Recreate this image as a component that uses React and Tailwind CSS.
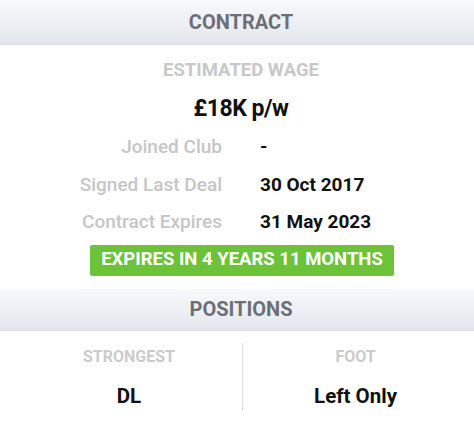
export default function App() {
  const rows = [
    { label: 'Joined Club', value: '-' },
    { label: 'Signed Last Deal', value: '30 Oct 2017' },
    { label: 'Contract Expires', value: '31 May 2023' },
  ];

  return (
    <div className="w-[474px] h-[425px] bg-white overflow-hidden font-['Roboto',sans-serif]">
      <SectionBar title="CONTRACT" className="h-[45px]" />

      <div className="flex flex-col items-center pl-[8px]">
        <div className="mt-[13px] text-[18.5px] leading-[24px] font-bold text-[#c8c8c8]">
          ESTIMATED WAGE
        </div>
        <div className="mt-[12px] text-[23px] leading-[30px] font-bold tracking-[-0.02em] text-[#111]">
          £18K p/w
        </div>
      </div>

      <div className="mt-[4px] grid grid-cols-[222px_1fr] gap-x-[38px]">
        {rows.map((row) => (
          <div key={row.label} className="contents">
            <div className="text-right text-[19px] leading-[37.5px] font-medium text-[#c6c6c6]">
              {row.label}
            </div>
            <div className="text-[19px] leading-[37.5px] font-bold text-[#111]">
              {row.value}
            </div>
          </div>
        ))}
      </div>

      <div className="mt-[4px] flex justify-center pl-[10px]">
        <div className="h-[31px] px-[11px] flex items-center rounded-[2px] bg-[#6cc33a] text-white text-[18.5px] font-bold">
          EXPIRES IN 4 YEARS 11 MONTHS
        </div>
      </div>

      <SectionBar title="POSITIONS" className="mt-[13px] h-[42px]" />

      <div className="mt-[12px] grid grid-cols-2 pl-[16px] pr-[6px]">
        <Stat label="STRONGEST" value="DL" />
        <Stat label="FOOT" value="Left Only" divider />
      </div>
    </div>
  );
}

function SectionBar({ title, className }) {
  return (
    <div
      className={`${className} flex items-center justify-center pl-[8px] bg-gradient-to-b from-[#f8f9fb] via-[#edf0f4] to-[#e3e7ed] border-b border-[#d9dde3]`}
    >
      <span className="text-[20px] font-bold text-[#6b6f77]">{title}</span>
    </div>
  );
}

function Stat({ label, value, divider }) {
  return (
    <div
      className={`flex flex-col items-center h-[67px] ${divider ? 'border-l border-[#dcdcdc]' : ''}`}
    >
      <div className="mt-[3px] text-[16px] leading-[22px] font-bold text-[#cbcbcb]">
        {label}
      </div>
      <div className="mt-[14px] text-[20.5px] leading-[28px] font-bold text-[#111]">
        {value}
      </div>
    </div>
  );
}
